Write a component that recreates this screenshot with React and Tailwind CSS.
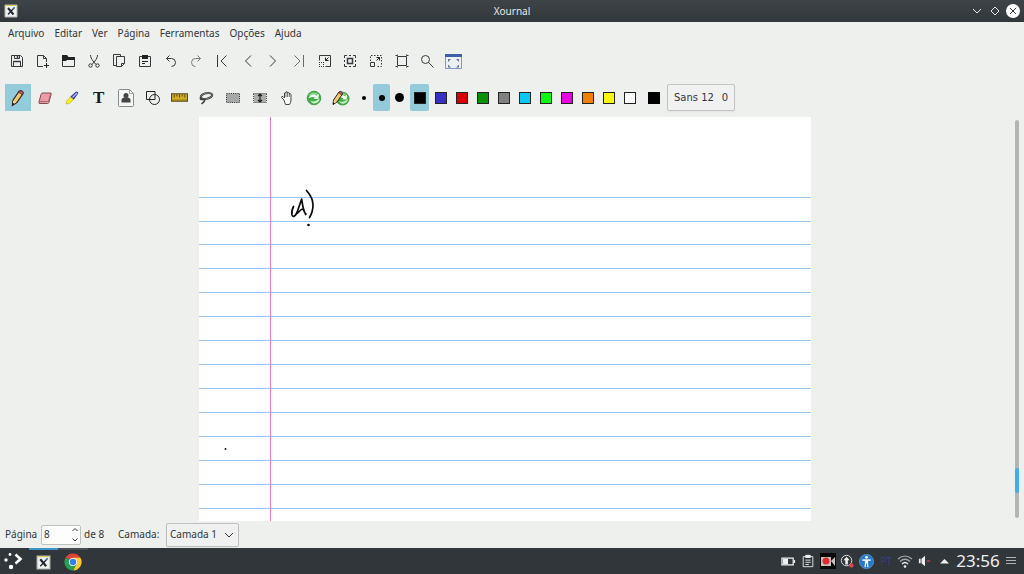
import { useState } from 'react';

const menus = ['Arquivo', 'Editar', 'Ver', 'Página', 'Ferramentas', 'Opções', 'Ajuda'];

const colors = [
  ['Preto', 'bg-black'],
  ['Azul', 'bg-[#3830c0]'],
  ['Vermelho', 'bg-[#d80008]'],
  ['Verde', 'bg-[#089008]'],
  ['Cinza', 'bg-[#808080]'],
  ['Azul claro', 'bg-[#08c8f8]'],
  ['Verde claro', 'bg-[#08f810]'],
  ['Magenta', 'bg-[#e808e0]'],
  ['Laranja', 'bg-[#f08000]'],
  ['Amarelo', 'bg-[#f8f808]'],
  ['Branco', 'bg-white'],
];

const thicknesses = [
  ['Fina', 'size-1'],
  ['Média', 'size-[6px]'],
  ['Grossa', 'size-[9px]'],
];

const ruleCount = 60;
const ruleStart = 79.6;
const ruleGap = 23.94;

function Icon({ children, className = 'size-4' }) {
  return (
    <svg viewBox="0 0 16 16" className={className} fill="none" stroke="#35393c" strokeWidth="1" aria-hidden="true">
      {children}
    </svg>
  );
}

const actions = [
  ['Salvar', <Icon><path d="M2.500 2.500h9l2 2v9h-11zM5.500 2.500v3h5v-3M4.500 13.500v-5h7v5" /><path d="M8.500 3v2M4.500 8.500h7" strokeWidth="1.500" /></Icon>],
  ['Nova anotação', <Icon><path d="M9 13.500H3.500v-11h6l3 3V9M9.500 2.500v3h3" /><path d="M12.500 10v5M10 12.500h5" stroke="#222" /></Icon>],
  ['Abrir', <Icon><path d="M2.500 6.500h12v7h-12z" /><path d="M2 2h5l1.500 2H15v3H7L6 8H2z" fill="#222" stroke="none" /></Icon>],
  ['Recortar', <Icon><path d="M4.500 2c0 2 1 4 2.500 6l3 3.500M11.500 2c0 2-1 4-2.500 6l-3 3.500" /><circle cx="4.500" cy="12.500" r="1.700" /><circle cx="11.500" cy="12.500" r="1.700" /></Icon>],
  ['Copiar', <Icon><path d="M5 12.500H2.500v-11h7V3" /><path d="M5.500 3.500h8v7l-3 3h-5zM10.500 13.500v-3h3" /></Icon>],
  ['Colar', <Icon><path d="M2.500 3.500h11v10h-11z" /><path d="M5 2h6v4H5z" fill="#222" stroke="none" /><path d="M5 8.500h6M5 10.500h3" stroke="#222" /></Icon>],
  ['Desfazer', <Icon><path d="M6.500 2.500l-3 3 3 3M3.500 5.500h5a4 4 0 0 1 0 8" /></Icon>],
  ['Refazer', <Icon><g stroke="#777b7d"><path d="M9.500 2.500l3 3-3 3M12.500 5.500h-5a4 4 0 0 0 0 8" /></g></Icon>],
  ['Primeira página', <Icon><path d="M3.500 2v12M12.500 2.500L7 8l5.500 5.500" /></Icon>],
  ['Página anterior', <Icon><path d="M11 2.500L5.500 8l5.500 5.500" /></Icon>],
  ['Próxima página', <Icon><path d="M5 2.500L10.500 8 5 13.500" /></Icon>],
  ['Última página', <Icon><g stroke="#666a6c"><path d="M12.500 2v12M3.500 2.500L9 8l-5.500 5.500" /></g></Icon>],
  ['Reduzir', <Icon><path d="M2.500 7.500v-5h11v11H8.500" /><path d="M2 9.500h1M4 9.500h1M6 9.500h1M6.500 11v1M6.500 13v1M2.500 11v1M2.500 13v1M4 13.500h1" /><path d="M11.500 4.500L8.500 7.500M8.500 4.500v3h3" stroke="#222" /></Icon>],
  ['Ajustar à página', <Icon><path d="M2.500 5V2.500H5M11 2.500h2.500V5M13.500 11v2.500H11M5 13.500H2.500V11M7 2.500h2M7 13.500h2M2.500 7v2M13.500 7v2" /><path d="M5.500 5.500h5v5h-5z" strokeWidth="1.500" /></Icon>],
  ['Ampliar', <Icon><path d="M2.500 9.500h4v4h-4z" /><path d="M2.500 8V2.500h11v11H8" strokeDasharray="1.500 1.500" /><path d="M8.500 7.500l3-3M8.500 4.500h3v3" stroke="#222" /></Icon>],
  ['Tamanho normal', <Icon><path d="M3.500 3.500h9v9h-9z" /><path d="M1.500 2.500h2v-1M12.500 1.500v1h2M1.500 13.500h2v1M14.500 13.500h-2v1" /></Icon>],
  ['Zoom', <Icon><circle cx="6.500" cy="6.500" r="4" /><path d="M9.500 9.500l5 5" /></Icon>],
  ['Tela cheia', (
    <svg viewBox="0 0 17 15" className="h-[15px] w-[17px]" fill="none" aria-hidden="true">
      <path d="M.5.5h16v14H.5z" fill="#eaf0f6" stroke="#7f98c4" />
      <path d="M0 0h17v3H0z" fill="#3c5fa8" />
      <path d="M3 5h3L3 8zM14 5h-3l3 3zM3 13.500h3l-3-3zM14 13.500h-3l3-3z" fill="#6b7480" />
    </svg>
  )],
];

function Refresh() {
  return (
    <>
      <circle cx="8" cy="8" r="6.800" fill="#3fae42" stroke="#3c8f40" strokeWidth=".8" />
      <path d="M2.500 6a6 6 0 0 1 11 0q-5-3-11 0z" fill="#8ed88c" stroke="none" />
      <path d="M2.500 8.500Q3.500 4.500 7.500 4.500q2 0 3 1.300L12.500 4v5H7.700L9 7.500Q6 6 2.500 8.500z" fill="#f4fff2" stroke="none" />
      <path d="M4 10.500q4 2 7.500-.5l2.300-1.500q-1 4.500-5.300 5-2.500.2-4.500-3z" fill="#d4f2d0" stroke="none" />
    </>
  );
}

function Pencil() {
  return (
    <>
      <path d="M3 14.500l.5-4.500L9 2q2-1.500 3.500 1v1L7 12z" fill="#f0c870" stroke="#302018" />
      <path d="M9.500 1.700q1.700-1 3 1.300v.7L11.500 5 8.700 3z" fill="#c8545c" stroke="#30242a" strokeWidth=".5" />
      <path d="M3.300 14l.5-3.500 2.700 1.300z" fill="#f0dcb0" stroke="none" />
      <path d="M3 15v-3l1.800 1.200z" fill="#181818" stroke="none" />
    </>
  );
}

const tools = [
  ['Caneta', <Icon className="size-[18px]"><Pencil /></Icon>],
  ['Borracha', <Icon><path d="M5.500 3h8q1 0 .7 1L12 12q-.4 1.500-1.500 1.500H3q-1.500 0-1-1.500L4 4.500Q4.500 3 5.500 3z" fill="#eb9ca4" stroke="#7c4a50" /><path d="M2.500 11.500h8q1 0 1.300-1.500L13.500 4" stroke="#a86870" /></Icon>],
  ['Marca-texto', <Icon><path d="M6.500 7L12 2q1.500-.5 2 1L9.500 9.500z" fill="#3e3ed8" stroke="#22227c" strokeWidth=".7" /><path d="M6.500 7l3 2.500-4 4-3.500.5.700-3z" fill="#f6f410" stroke="#a09c28" strokeWidth=".5" /><path d="M8.500 7.500l4.500-4.500" stroke="#b8b8f0" strokeWidth="1.300" /></Icon>],
  ['Texto', <span className="font-['Liberation_Serif',serif] text-[17px] leading-4 font-bold text-[#181818]">T</span>],
  ['Imagem', (
    <svg viewBox="0 0 16 18" className="h-[18px] w-4" fill="none" aria-hidden="true">
      <path d="M.5 1.500q0-1 1-1h10l4 4v12q0 1-1 1h-13q-1 0-1-1z" fill="#f5f6f5" stroke="#85898a" />
      <path d="M11.500.5v4h4" stroke="#a5a8a8" />
      <circle cx="8" cy="6.500" r="2.500" fill="#444" />
      <path d="M3.500 13.500V11q0-2 3-2.500h3q3 .5 3 2.500v2.500z" fill="#444" />
    </svg>
  )],
  ['Formas', <Icon><path d="M1.500 1.500h8.500v8H1.500z" stroke="#222" /><circle cx="9.500" cy="9.500" r="5" stroke="#222" /></Icon>],
  ['Régua', <Icon className="size-[17px]"><path d="M.5 4.500h15v7H.5z" fill="#cfae24" stroke="#554a20" /><path d="M1 10.500h14" stroke="#8f7818" /><path d="M3 5v3M5.500 5v2M8 5v3M10.500 5v2M13 5v3" stroke="#473c10" strokeWidth=".8" /></Icon>],
  ['Laço', <Icon><ellipse cx="8.500" cy="6" rx="5.800" ry="2.800" transform="rotate(-12 8.500 6)" stroke="#3c3c3c" strokeWidth="2.200" /><ellipse cx="8.500" cy="6" rx="5.800" ry="2.800" transform="rotate(-12 8.500 6)" stroke="#a0a0a0" strokeWidth=".6" /><path d="M3 7.500Q1.500 9 3.500 9.500 7.500 9 6.500 11q-.5 1-3 3" stroke="#3c3c3c" strokeWidth="1.600" /></Icon>],
  ['Selecionar região', <Icon><path d="M1.500 3.500h13v9h-13z" fill="#a6a8a7" stroke="#222" strokeDasharray="1 1.200" /></Icon>],
  ['Espaço vertical', <Icon><path d="M2 4h12v8H2z" fill="#acaeac" stroke="none" /><path d="M1.500 3.500h13M1.500 12.500h13" stroke="#222" strokeDasharray="1 1" /><path d="M1.500 4v8M14.500 4v8" stroke="#444" strokeDasharray="1 1" /><path d="M8 4v8M6 6l2-2 2 2M6 10l2 2 2-2" stroke="#1c1c1c" strokeWidth="1.200" /></Icon>],
  ['Mão', <Icon><path d="M5 10L2.500 7.500q0-1.500 1.500-1L5.500 8V3q.7-1 1.500 0v-.8q.8-1 1.600 0V3q1-1 1.700 0v1q1-.8 1.700.3V10q0 2-1.500 4.500h-4Q5.500 12 5 10z" fill="#fafafa" stroke="#333" strokeWidth=".9" /><path d="M7 3v4M8.600 3v4M10.300 4v3" strokeWidth=".7" /></Icon>],
  ['Padrão', <Icon><Refresh /></Icon>],
  ['Caneta padrão', (
    <svg viewBox="0 0 18 18" className="size-[18px]" fill="none" aria-hidden="true">
      <g transform="translate(3 2) scale(.95)"><Refresh /></g>
      <g transform="translate(-2 1)"><Pencil /></g>
    </svg>
  )],
];

function XournalIcon({ className }) {
  return (
    <svg viewBox="0 0 14 14" className={className} aria-hidden="true">
      <path d="M1 1h12v12H1z" fill="#f0f2ef" stroke="#b5b8b4" />
      <path d="M1 1.500h12" stroke="#d8c860" />
      <path d="M4 4l5.500 6.500" stroke="#202634" strokeWidth="2" />
      <path d="M10.500 3.500L4 10.500" stroke="#202634" strokeWidth="1.200" />
      <path d="M9.500 4.500l1.500-1.500" stroke="#4080c0" />
    </svg>
  );
}

function TitleBar() {
  return (
    <header className="grid h-[22px] shrink-0 grid-cols-[1fr_auto_1fr] items-center bg-linear-to-b from-[#3d4346] to-[#32373a] px-1 text-[#e6e8e9]">
      <XournalIcon className="size-[14px]" />
      <h1>Xournal</h1>
      <div className="flex items-center justify-end gap-1">
        <button type="button" aria-label="Minimizar" className="flex size-[14px] items-center justify-center">
          <svg viewBox="0 0 14 14" className="size-[14px]" fill="none" stroke="#e6e8e9"><path d="M3 5l4 4 4-4" /></svg>
        </button>
        <button type="button" aria-label="Maximizar" className="flex size-[14px] items-center justify-center">
          <svg viewBox="0 0 14 14" className="size-[14px]" fill="none" stroke="#e6e8e9"><path d="M7 3l4 4-4 4-4-4z" /></svg>
        </button>
        <button type="button" aria-label="Fechar" className="flex size-[14px] items-center justify-center">
          <svg viewBox="0 0 14 14" className="size-[14px]" fill="none" stroke="#31363b"><circle cx="7" cy="7" r="7" fill="#fff" stroke="none" /><path d="M4 4l6 6M10 4l-6 6" /></svg>
        </button>
      </div>
    </header>
  );
}

function MainToolbar() {
  return (
    <div role="toolbar" aria-label="Principal" className="grid h-[34px] w-[462px] grid-cols-18">
      {actions.map(([label, icon]) => (
        <button key={label} type="button" aria-label={label} className="flex items-center justify-center">
          {icon}
        </button>
      ))}
    </div>
  );
}

function PenToolbar() {
  const [tool, setTool] = useState('Caneta');
  const [thickness, setThickness] = useState('Média');
  const [color, setColor] = useState('Preto');

  return (
    <div role="toolbar" aria-label="Ferramentas" className="flex h-[39px] shrink-0 items-center pl-[5px]">
      <div className="grid w-[350px] grid-cols-13">
        {tools.map(([label, icon]) => (
          <button
            key={label}
            type="button"
            aria-label={label}
            aria-pressed={tool === label}
            onClick={() => setTool(label)}
            className={`flex h-[27px] w-[26px] items-center justify-center ${tool === label ? 'bg-[#93cbdb]' : ''}`}
          >
            {icon}
          </button>
        ))}
      </div>
      <div className="flex gap-px">
        {thicknesses.map(([label, size]) => (
          <button
            key={label}
            type="button"
            aria-label={label}
            aria-pressed={thickness === label}
            onClick={() => setThickness(label)}
            className={`flex h-[27px] w-[17px] items-center justify-center rounded-xs ${thickness === label ? 'bg-[#93cbdb]' : ''}`}
          >
            <span className={`rounded-full bg-black ${size}`} />
          </button>
        ))}
      </div>
      <div className="mx-[2px] flex gap-[2px]">
        {colors.map(([label, bg]) => (
          <button
            key={label}
            type="button"
            aria-label={label}
            aria-pressed={color === label}
            onClick={() => setColor(label)}
            className={`flex h-[27px] w-[19px] items-center justify-center rounded-xs ${color === label ? 'bg-[#93cbdb]' : ''}`}
          >
            <span className={`size-3 border border-[#222] ${bg}`} />
          </button>
        ))}
      </div>
      <button type="button" aria-label="Escolher cor" className="flex h-[27px] w-[26px] items-center justify-center">
        <span className="size-3 bg-black" />
      </button>
      <button
        type="button"
        className="flex h-[27px] w-[68px] items-center justify-between rounded-xs border border-[#c3c5c5] bg-[#f0f1f0] px-[6px] font-['DejaVu_Sans',sans-serif] text-[#31363b] shadow-xs"
      >
        <span>Sans 12</span>
        <span>0</span>
      </button>
    </div>
  );
}

function Canvas() {
  return (
    <main className="flex min-h-0 flex-1 overflow-hidden">
      <div className="flex min-w-0 flex-1 justify-center">
        <svg className="h-full w-[612px] bg-[#fefffe]" role="img" aria-label="Página 8">
          {Array.from({ length: ruleCount }, (_, i) => (
            <rect key={i} y={Math.round(ruleStart + i * ruleGap)} width="100%" height="1" fill="#9dc6f2" />
          ))}
          <path d="M71 0h1v2000h-1z" fill="#ee7dba" />
          <g fill="none" stroke="#0a0a0a" strokeWidth="1.700" strokeLinecap="round" strokeLinejoin="round">
            <path d="M94.500 89.500c-1.500 3-2 6.500-1.500 8.500 1 2.500 3 1.500 4.500-1.500 2-4.500 3.500-10 5.200-14.500.5 4 1.300 11 4 15.500M98 96.500c2-1 3.500-4.500 5.500-4.500 1.500.5 1 3 3.500 5" />
            <path d="M107.500 73.500c4.500 5 6.500 9 6.500 14.500 0 5-1 8.500-3.500 12.500" />
          </g>
          <circle cx="109.500" cy="108" r="1.300" fill="#0a0a0a" />
          <circle cx="26.500" cy="332" r=".9" fill="#0a0a0a" />
        </svg>
      </div>
      <div className="flex w-[14px] justify-end py-[3px] pr-[5px]">
        <div
          role="scrollbar"
          aria-label="Rolagem vertical"
          aria-controls="root"
          aria-valuenow={93}
          className="flex w-1 flex-col rounded-full bg-[#b4b6b5]"
        >
          <div className="flex-[348]" />
          <div className="flex-[25] rounded-full bg-[#3daee9]" />
          <div className="flex-[25]" />
        </div>
      </div>
    </main>
  );
}

function StatusBar() {
  const [page, setPage] = useState(8);

  return (
    <div className="flex h-[27px] shrink-0 items-center pl-[5px]">
      <label htmlFor="page" className="w-9">Página</label>
      <div className="flex h-5 w-10 items-stretch rounded-xs border border-[#bfc1c1] bg-[#fcfdfc]">
        <input
          id="page"
          type="text"
          inputMode="numeric"
          value={page}
          onChange={(e) => setPage(e.target.value)}
          className="w-[29px] bg-transparent pl-[2px] outline-none"
        />
        <div className="flex flex-col justify-between py-px">
          <button type="button" aria-label="Próxima" onClick={() => setPage((p) => Math.min(8, Number(p) + 1))}>
            <svg viewBox="0 0 8 6" className="h-[6px] w-2" fill="none" stroke="#31363b"><path d="M1.500 4L4 1.500 6.500 4" /></svg>
          </button>
          <button type="button" aria-label="Anterior" onClick={() => setPage((p) => Math.max(1, Number(p) - 1))}>
            <svg viewBox="0 0 8 6" className="h-[6px] w-2" fill="none" stroke="#31363b"><path d="M1.500 1.500L4 4l2.500-2.500" /></svg>
          </button>
        </div>
      </div>
      <span className="w-[37px] pl-[3px]">de 8</span>
      <label htmlFor="layer" className="w-12">Camada:</label>
      <div className="grid items-center">
        <select
          id="layer"
          className="col-start-1 row-start-1 h-6 w-[73px] appearance-none rounded-xs border border-[#bfc1c1] bg-[#eff0ef] pl-[3px] shadow-xs"
        >
          <option>Camada 1</option>
        </select>
        <svg viewBox="0 0 10 8" className="pointer-events-none col-start-1 row-start-1 mr-[5px] h-2 w-[10px] justify-self-end" fill="none" stroke="#31363b">
          <path d="M1 2l4 4 4-4" />
        </svg>
      </div>
    </div>
  );
}

const tray = [
  ['Bateria', <Icon className="size-[15px]"><path d="M1 4.500h12v7H1z" stroke="#eff0f1" strokeWidth="1.300" /><path d="M2 5h5.500v6H2zM13.500 6.500H15v3h-1.500z" fill="#eff0f1" stroke="none" /></Icon>],
  ['Área de transferência', <Icon className="size-[14px]"><path d="M2.500 3h11v11.500h-11zM5 7h6M5 9.500h6M5 12h4" stroke="#eff0f1" /><path d="M5 1h6v3.500H5z" fill="#eff0f1" stroke="none" /></Icon>],
  ['Gravador de tela', <Icon className="size-4"><path d="M0 0h16v16H0z" fill="#080808" stroke="none" /><path d="M1 4h10v9H1zM11 8l4-4v9z" fill="#c8c0bc" stroke="none" /><circle cx="6" cy="8" r="3.500" fill="#e02b30" stroke="none" /></Icon>],
  ['Atualizações', <Icon className="size-[14px]"><circle cx="7.500" cy="7.500" r="6" stroke="#eff0f1" /><path d="M7.500 3l3.500 4H9v5H6V7H4z" fill="#eff0f1" stroke="none" /><circle cx="13" cy="13" r="2.500" fill="#da4453" stroke="none" /></Icon>],
  ['Acessibilidade', <Icon className="size-[15px]"><circle cx="8" cy="8" r="7.500" fill="#2878c8" stroke="#5098d8" /><circle cx="8" cy="3.500" r="1.500" fill="#fff" stroke="none" /><path d="M3.500 6.500h9" stroke="#fff" strokeWidth="1.500" /><path d="M8 6v4M7 6.500v3.500L6.500 14M9 6.500v3.500l.5 4" stroke="#fff" strokeWidth="1.300" /></Icon>],
  ['Teclado', <span className="text-[#3c3c86]">PT</span>],
  ['Rede', <Icon className="size-4"><g stroke="#a5a9ac" strokeWidth="1.200"><path d="M1 6q7-6 14 0M3 8.500q5-4.500 10 0" /><path d="M5 11q3-3 6 0" stroke="#eff0f1" /></g><circle cx="8" cy="13.500" r="1.300" fill="#eff0f1" stroke="none" /></Icon>],
  ['Volume', <Icon className="size-[14px]"><path d="M1 5.500h2v5H1zM4 5.500L8 2v12l-4-3.500z" fill="#eff0f1" stroke="none" /><path d="M10 8h4" stroke="#c04450" strokeWidth="1.500" /></Icon>],
  ['Mostrar ícones ocultos', <Icon className="size-[13px]"><path d="M2.500 10.500L8 5l5.500 5.500z" fill="#eff0f1" stroke="none" /></Icon>],
];

function Taskbar() {
  return (
    <footer className="flex h-[26px] shrink-0 items-stretch bg-[#30363a] pr-2 text-[#eff0f1]">
      <button type="button" aria-label="Menu de aplicativos" className="flex w-[29px] items-center pl-1">
        <svg viewBox="0 0 20 20" className="size-5" fill="#fff">
          <circle cx="6" cy="3.500" r="1.400" /><circle cx="2" cy="9" r="1.700" /><circle cx="7" cy="16" r="2.200" />
          <path d="M11.500 3.500l5 4.500-5 4.500" fill="none" stroke="#fff" strokeWidth="2.600" />
        </svg>
      </button>
      <button type="button" aria-label="Xournal" className="flex w-[29px] items-center justify-center border-t-2 border-[#3b94c4]">
        <XournalIcon className="size-[15px]" />
      </button>
      <button type="button" aria-label="Google Chrome" className="flex w-[30px] items-center justify-center border-t-2 border-[#484d51]">
        <svg viewBox="0 0 18 18" className="size-[18px]">
          <path d="M9 9L1.600 4.700A8.500 8.500 0 0 1 16.400 4.700z" fill="#e04436" />
          <path d="M9 9L9 4.700h7.400A8.500 8.500 0 0 1 9 17.500L12.500 11z" fill="#fccb34" />
          <path d="M9 9L1.600 4.700A8.500 8.500 0 0 0 9 17.500L12.500 11z" fill="#2b9f50" />
          <circle cx="9" cy="9" r="4" fill="#fff" />
          <circle cx="9" cy="9" r="3.200" fill="#3b7de8" />
        </svg>
      </button>
      <div className="ml-auto grid w-[175px] grid-cols-9">
        {tray.map(([label, icon]) => (
          <button key={label} type="button" aria-label={label} className="flex items-center justify-center">
            {icon}
          </button>
        ))}
      </div>
      <time dateTime="23:56" className="flex w-12 items-center justify-center text-[17px]">23:56</time>
      <button type="button" aria-label="Caixa de ferramentas" className="flex w-[14px] items-center justify-end">
        <svg viewBox="0 0 10 10" className="size-[10px]" stroke="#b0b4b7"><path d="M0 1.500h10M0 4.500h10M0 7.500h10" /></svg>
      </button>
    </footer>
  );
}

export default function App() {
  return (
    <div className="flex h-screen flex-col overflow-hidden bg-[#eef0ed] font-['Noto_Sans',sans-serif] text-[10px] text-[#31363b]">
      <TitleBar />
      <nav className="flex h-[22px] shrink-0 items-center gap-[10px] pl-2">
        {menus.map((menu) => (
          <button key={menu} type="button">{menu}</button>
        ))}
      </nav>
      <div className="shrink-0 pl-1">
        <MainToolbar />
      </div>
      <PenToolbar />
      <Canvas />
      <StatusBar />
      <Taskbar />
    </div>
  );
}
